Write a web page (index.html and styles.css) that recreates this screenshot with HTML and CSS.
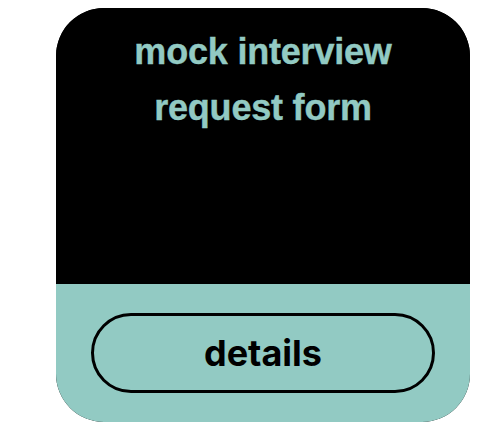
FILE: index.html
```html
<!DOCTYPE html>
<html>
<head>
<meta charset="utf-8">
<link rel="stylesheet" href="styles.css">
</head>
<body>
<div class="card">
  <div class="top">
    <h2 class="title">mock interview<br>request form</h2>
  </div>
  <div class="bottom">
    <button class="btn">details</button>
  </div>
</div>
</body>
</html>
```
FILE: styles.css
```css
html, body {
  margin: 0;
  padding: 0;
  background: #ffffff;
}
body {
  padding: 8px 0 0 56px;
}
.card {
  width: 414px;
  height: 414px;
  border-radius: 48px;
  overflow: hidden;
  display: flex;
  flex-direction: column;
  background: #000;
}
.top {
  height: 276px;
  background: #000;
  padding-top: 16px;
  box-sizing: border-box;
}
.title {
  margin: 0;
  text-align: center;
  color: #92cac3;
  font-family: "Liberation Sans", Arial, sans-serif;
  font-weight: 700;
  font-size: 36px;
  line-height: 56px;
  letter-spacing: -0.2px;
  -webkit-text-stroke: 0.4px #92cac3;
}
.bottom {
  flex: 1;
  background: #92cac3;
  padding: 29px 35px;
  box-sizing: border-box;
  display: flex;
}
.btn {
  flex: 1;
  height: 80px;
  border: 3px solid #000;
  border-radius: 40px;
  background: transparent;
  font-family: Inter, "Liberation Sans", sans-serif;
  font-weight: 700;
  font-size: 36px;
  color: #000;
  padding: 0;
  cursor: pointer;
}
```
